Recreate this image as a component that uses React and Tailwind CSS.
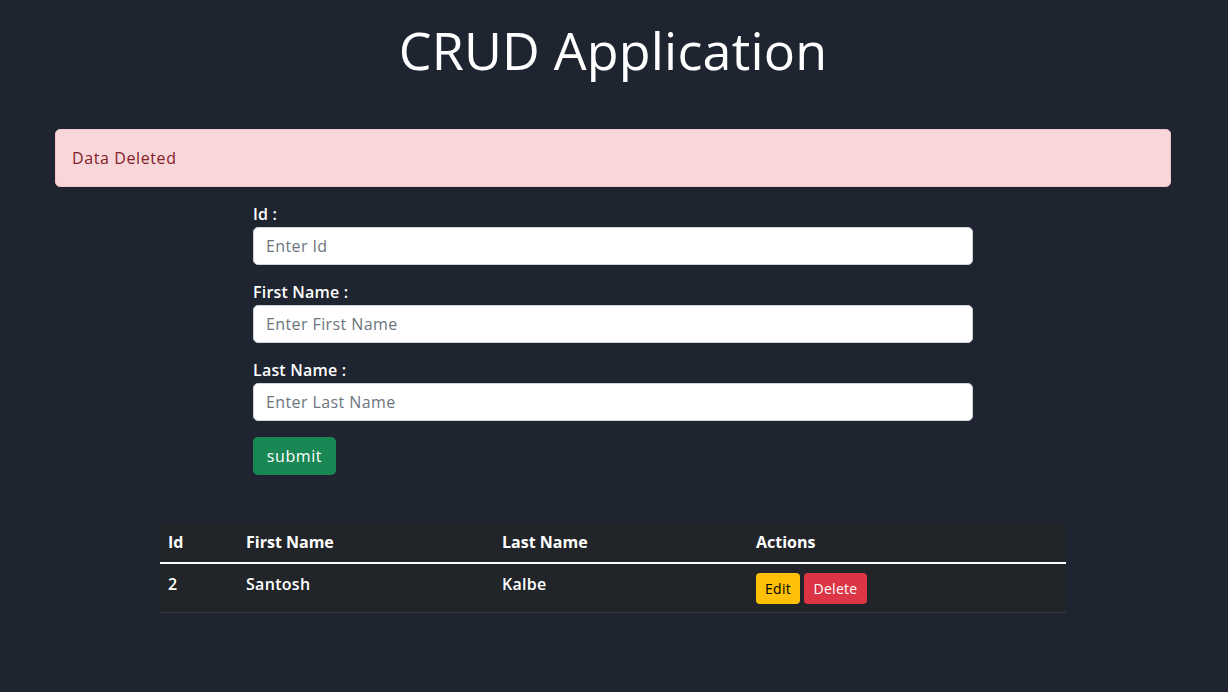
import React, { useState } from "react";

const rows = [{ id: 2, firstName: "Santosh", lastName: "Kalbe" }];

export default function App() {
    const [id, setId] = useState("");
    const [firstName, setFirstName] = useState("");
    const [lastName, setLastName] = useState("");

    const inputClass =
        "block w-full h-[38px] rounded-[5px] border border-[#ced4da] bg-white px-3 text-[16px] tracking-[0.4px] text-[#212529] placeholder:text-[#6c757d] outline-none";

    return (
        <div className="min-h-screen bg-[#1e2430] pb-10 pr-[2px] font-['Open_Sans',sans-serif] text-white">
            <h1 className="pt-[19px] pb-[48px] text-center text-[52px] leading-[62px] font-normal tracking-[0.2px]">
                CRUD Application
            </h1>

            <div className="mx-auto max-w-[1140px] px-3">
                <div className="rounded-[5px] border border-[#f5c2c7] bg-[#f8d7da] px-4 py-4 text-[16px] leading-6 tracking-[0.6px] text-[#842029]">
                    Data Deleted
                </div>

                <form className="mx-auto mt-[15px] w-[720px]" onSubmit={(e) => e.preventDefault()}>
                    <div className="mb-[15px]">
                        <label className="mb-[1px] block text-[16px] leading-6 font-semibold tracking-[0.2px]">Id :</label>
                        <input className={inputClass} placeholder="Enter Id" value={id} onChange={(e) => setId(e.target.value)} />
                    </div>
                    <div className="mb-[15px]">
                        <label className="mb-[1px] block text-[16px] leading-6 font-semibold tracking-[0.2px]">First Name :</label>
                        <input className={inputClass} placeholder="Enter First Name" value={firstName} onChange={(e) => setFirstName(e.target.value)} />
                    </div>
                    <div className="mb-4">
                        <label className="mb-[1px] block text-[16px] leading-6 font-semibold tracking-[0.2px]">Last Name :</label>
                        <input className={inputClass} placeholder="Enter Last Name" value={lastName} onChange={(e) => setLastName(e.target.value)} />
                    </div>
                    <button className="h-[38px] w-[83px] rounded-[5px] bg-[#198754] text-[16px] font-medium tracking-[0.6px] text-white">
                        submit
                    </button>
                </form>
            </div>

            <div className="mx-auto mt-[47px] w-[906px] bg-[#212529]">
                <div className="grid grid-cols-[78px_256px_254px_318px] border-b-2 border-white text-[16px] leading-6 font-bold">
                    <div className="p-2">Id</div>
                    <div className="p-2">First Name</div>
                    <div className="p-2">Last Name</div>
                    <div className="p-2">Actions</div>
                </div>
                {rows.map((item) => (
                    <div key={item.id} className="grid grid-cols-[78px_256px_254px_318px] border-b border-[#373b3e] text-[16px] leading-6 font-semibold tracking-[0.3px]">
                        <div className="p-2">{item.id}</div>
                        <div className="p-2">{item.firstName}</div>
                        <div className="p-2">{item.lastName}</div>
                        <div className="flex gap-1 px-2 pt-[9px] pb-2">
                            <button className="h-[31px] w-[44px] rounded-[4px] bg-[#ffc107] text-[14px] font-medium text-black">Edit</button>
                            <button className="h-[31px] w-[63px] rounded-[4px] bg-[#dc3545] text-[14px] font-medium text-white">Delete</button>
                        </div>
                    </div>
                ))}
            </div>
        </div>
    );
}
